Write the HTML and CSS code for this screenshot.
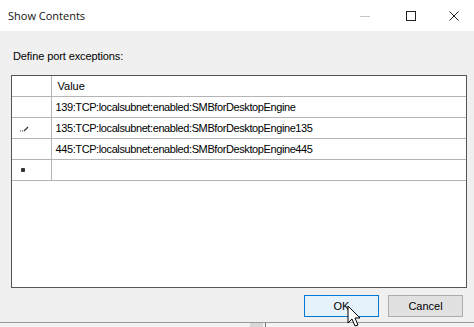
FILE: index.html
```html
<!DOCTYPE html>
<html lang="en">
<head>
    <meta charset="UTF-8">
    <title>Show Contents</title>
    <link rel="stylesheet" href="styles.css">
</head>
<body>
    <div class="window">
        <div class="titlebar">
            <span class="title">Show Contents</span>
            <div class="caption-btns">
                <span class="cbtn min"><svg width="10" height="10" viewBox="0 0 10 10"><path d="M0 5.5h10" stroke="#c8c8c8" stroke-width="1"/></svg></span>
                <span class="cbtn max"><svg width="10" height="10" viewBox="0 0 10 10"><rect x="0.5" y="0.5" width="9" height="9" fill="none" stroke="#222" stroke-width="1"/></svg></span>
                <span class="cbtn close"><svg width="10" height="10" viewBox="0 0 10 10"><path d="M0.5 0.5l9 9M9.5 0.5l-9 9" stroke="#222" stroke-width="1"/></svg></span>
            </div>
        </div>
        <div class="content">
            <div class="label">Define port exceptions:</div>
            <div class="grid">
                <table>
                    <tr class="head">
                        <td class="rh"></td>
                        <td>Value</td>
                    </tr>
                    <tr>
                        <td class="rh"></td>
                        <td>139:TCP:localsubnet:enabled:SMBforDesktopEngine</td>
                    </tr>
                    <tr>
                        <td class="rh"><svg width="10" height="8" viewBox="0 0 10 8"><path d="M1 7h1M3 7h1M5 7l4-4" stroke="#333" stroke-width="1.2"/></svg></td>
                        <td>135:TCP:localsubnet:enabled:SMBforDesktopEngine135</td>
                    </tr>
                    <tr>
                        <td class="rh"></td>
                        <td>445:TCP:localsubnet:enabled:SMBforDesktopEngine445</td>
                    </tr>
                    <tr>
                        <td class="rh"><span class="star"></span></td>
                        <td></td>
                    </tr>
                </table>
            </div>
            <div class="buttons">
                <button class="btn ok">OK</button>
                <button class="btn">Cancel</button>
            </div>
        </div>
    </div>
    <div class="below">
        <span class="bit1"></span>
        <span class="bit2"></span>
    </div>
    <svg class="cursor" width="14" height="24" viewBox="0 0 14 24"><path d="M1 1v17l4-4 3 7 3-1-3-7h5z" fill="#fff" stroke="#000" stroke-width="1" stroke-linejoin="round"/></svg>
</body>
</html>
```

FILE: styles.css
```css
* { margin: 0; padding: 0; box-sizing: border-box; }
body { width: 474px; height: 327px; overflow: hidden; background: #f0f0f0; font-family: "Liberation Sans", Arial, sans-serif; font-size: 11px; color: #000; position: relative; }
.window { display: flex; flex-direction: column; height: 322px; }
.titlebar { height: 31px; background: #fff; display: flex; align-items: center; padding-left: 8px; }
.title { font-family: "Open Sans", "Noto Sans", sans-serif; font-size: 11px; color: #111; flex: 1; padding-bottom: 1px; }
.caption-btns { display: flex; height: 100%; }
.cbtn { width: 46px; display: flex; align-items: center; justify-content: center; }
.cbtn.close { width: 40px; }
.content { flex: 1; background: #f0f0f0; padding: 19px 8px 0 11px; display: flex; flex-direction: column; }
.label { height: 25px; padding-left: 2px; line-height: 13px; letter-spacing: -0.1px; }
.grid { width: 456px; height: 213px; border: 1px solid #555; background: #fff; }
table { border-collapse: collapse; width: 100%; }
td { height: 21px; border-bottom: 1px solid #b4b4b4; padding: 0 0 0 4px; white-space: nowrap; letter-spacing: -0.4px; }
td.rh { width: 39px; border-right: 1px solid #b4b4b4; padding: 0; text-align: center; }
tr.head td { height: 20px; padding-left: 6px; letter-spacing: 0; }
tr.head td.rh { padding: 0; }
td.rh svg { display: block; margin: 0 0 0 7px; }
.star { display: block; width: 4px; height: 4px; background: #333; border-radius: 1px; margin-left: 9px; }
.buttons { display: flex; justify-content: flex-end; gap: 9px; padding: 7px 3px 0 0; }
.btn { width: 75px; height: 22px; font-family: "Liberation Sans", Arial, sans-serif; font-size: 11px; background: #e1e1e1; border: 1px solid #adadad; color: #000; }
.btn.ok { background: #e5f1fb; border: 1px solid #0078d7; }
.below { height: 5px; border-top: 1px solid #9a9a9a; background: #f4f4f4; display: flex; }
.bit1 { margin-left: 250px; width: 13px; background: #d8d8d8; }
.bit2 { margin-left: 2px; width: 1px; background: #777; }
.cursor { position: absolute; left: 347px; top: 305px; }
```
